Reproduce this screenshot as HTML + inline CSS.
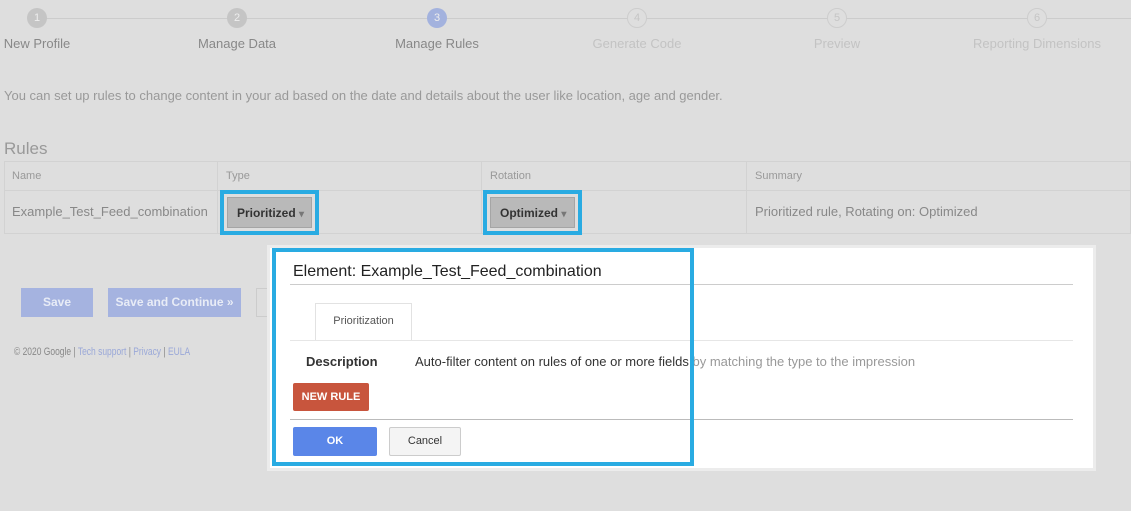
<!DOCTYPE html>
<html><head><style>
*{box-sizing:border-box;margin:0;padding:0}
body{width:1131px;height:511px;background:#dedede;font-family:"Liberation Sans",Arial,sans-serif;position:relative;overflow:hidden;color:#888}
.a{position:absolute}
.line{left:37px;top:18px;width:1094px;height:1px;background:#ccc}
.c{width:20px;height:20px;border-radius:50%;top:8px;font-size:11px;color:#eee;text-align:center;line-height:20px}
.lb{top:36px;font-size:13px;white-space:nowrap;transform:translateX(-50%)}
.tbl{left:4px;top:161px;width:1127px;height:73px;border:1px solid #d2d2d2}
.th{font-size:11px;color:#999;top:170px}
.hl{border:4px solid #29abe2;background:#dedede}
.dd{position:absolute;left:3px;top:3px;right:3px;bottom:3px;background:#b9b9b9;border:1px solid #a5a5a5;font-size:12px;font-weight:bold;color:#333;line-height:30px;padding-left:9px}
.btn{font-size:12px;font-weight:bold;color:#e8ecf6;background:#a5b3e0;text-align:center;line-height:29px;top:288px;height:29px}
</style></head><body>
<div class="a line"></div>
<div class="a c" style="left:27px;background:#c5c5c5">1</div>
<div class="a c" style="left:227px;background:#c5c5c5">2</div>
<div class="a c" style="left:427px;background:#a3b2de">3</div>
<div class="a c" style="left:627px;background:#dedede;border:1px solid #cdcdcd;color:#c5c5c5;line-height:18px">4</div>
<div class="a c" style="left:827px;background:#dedede;border:1px solid #cdcdcd;color:#c5c5c5;line-height:18px">5</div>
<div class="a c" style="left:1027px;background:#dedede;border:1px solid #cdcdcd;color:#c5c5c5;line-height:18px">6</div>
<div class="a lb" style="left:37px;color:#888">New Profile</div>
<div class="a lb" style="left:237px;color:#888">Manage Data</div>
<div class="a lb" style="left:437px;color:#888">Manage Rules</div>
<div class="a lb" style="left:637px;color:#c3c3c3">Generate Code</div>
<div class="a lb" style="left:837px;color:#c3c3c3">Preview</div>
<div class="a lb" style="left:1037px;color:#c3c3c3">Reporting Dimensions</div>
<div class="a" style="left:4px;top:88px;font-size:13px;color:#999">You can set up rules to change content in your ad based on the date and details about the user like location, age and gender.</div>
<div class="a" style="left:4px;top:139px;font-size:17px;color:#999">Rules</div>
<div class="a tbl"></div>
<div class="a" style="left:5px;top:190px;width:1125px;height:1px;background:#d2d2d2"></div>
<div class="a" style="left:217px;top:162px;width:1px;height:71px;background:#d2d2d2"></div>
<div class="a" style="left:481px;top:162px;width:1px;height:71px;background:#d2d2d2"></div>
<div class="a" style="left:746px;top:162px;width:1px;height:71px;background:#d2d2d2"></div>
<div class="a th" style="left:12px">Name</div>
<div class="a th" style="left:226px">Type</div>
<div class="a th" style="left:490px">Rotation</div>
<div class="a th" style="left:755px">Summary</div>
<div class="a" style="left:12px;top:204px;font-size:13px;color:#888">Example_Test_Feed_combination</div>
<div class="a" style="left:755px;top:204px;font-size:13px;color:#888">Prioritized rule, Rotating on: Optimized</div>
<div class="a hl" style="left:220px;top:190px;width:99px;height:45px"><div class="dd">Prioritized <span style="font-size:10px;color:#777">▾</span></div></div>
<div class="a hl" style="left:483px;top:190px;width:99px;height:45px"><div class="dd">Optimized <span style="font-size:10px;color:#777">▾</span></div></div>
<div class="a btn" style="left:21px;width:72px">Save</div>
<div class="a btn" style="left:108px;width:133px">Save and Continue »</div>
<div class="a" style="left:256px;top:288px;width:20px;height:29px;border:1px solid #ccc"></div>
<div class="a" style="left:14px;top:346px;font-size:11px;color:#888;white-space:nowrap;transform:scaleX(0.77);transform-origin:0 0">© 2020 Google | <span style="color:#9aa8d8">Tech support</span> | <span style="color:#9aa8d8">Privacy</span> | <span style="color:#9aa8d8">EULA</span></div>
<div class="a" style="left:267px;top:245px;width:829px;height:226px;background:#fff;border:3px solid #ececec"></div>
<div class="a" style="left:293px;top:263px;font-size:16px;color:#222">Element: Example_Test_Feed_combination</div>
<div class="a" style="left:290px;top:284px;width:783px;height:1px;background:#ccc"></div>
<div class="a" style="left:315px;top:303px;width:97px;height:38px;border:1px solid #e2e2e2;border-bottom:none;background:#fff;font-size:11px;color:#555;text-align:center;line-height:34px">Prioritization</div>
<div class="a" style="left:290px;top:340px;width:783px;height:1px;background:#e6e6e6"></div>
<div class="a" style="left:306px;top:354px;font-size:13px;font-weight:bold;color:#333">Description</div>
<div class="a" style="left:415px;top:354px;font-size:13px;color:#333;white-space:nowrap">Auto-filter content on rules of one or more fields<span style="color:#999"> by matching the type to the impression</span></div>
<div class="a" style="left:293px;top:383px;width:76px;height:28px;background:#c8553d;border-radius:2px;color:#fff;font-size:11px;font-weight:bold;text-align:center;line-height:28px">NEW RULE</div>
<div class="a" style="left:290px;top:419px;width:783px;height:1px;background:#bbb"></div>
<div class="a" style="left:293px;top:427px;width:84px;height:29px;background:#5a86e8;border-radius:2px;color:#fff;font-size:11px;font-weight:bold;text-align:center;line-height:29px">OK</div>
<div class="a" style="left:389px;top:427px;width:72px;height:29px;background:#f4f4f4;border:1px solid #ccc;border-radius:2px;color:#333;font-size:11px;text-align:center;line-height:27px">Cancel</div>
<div class="a" style="left:272px;top:248px;width:422px;height:218px;border:4px solid #29abe2"></div>
</body></html>
